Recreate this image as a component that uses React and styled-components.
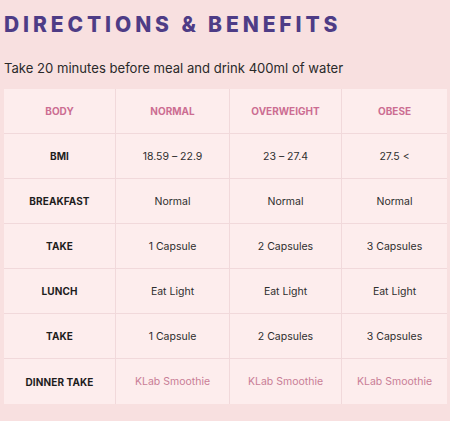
import React from "react";
import styled, { createGlobalStyle } from "styled-components";

const Global = createGlobalStyle`
  html, body { margin: 0; padding: 0; }
  body {
    background: #f8e0e0;
    font-family: Inter, "Open Sans", sans-serif;
    width: 450px;
    height: 421px;
    overflow: hidden;
  }
`;

const Page = styled.div`
  padding: 12px 3px 0 4px;
  display: flex;
  flex-direction: column;
`;

const Title = styled.h1`
  margin: 0;
  font-family: Inter, sans-serif;
  font-weight: 800;
  font-size: 21px;
  line-height: 26px;
  letter-spacing: 3.9px;
  color: #4e3c86;
`;

const Subtitle = styled.p`
  margin: 20px 0 0 0;
  font-size: 13.1px;
  line-height: 20px;
  color: #2a2a2a;
`;

const Table = styled.div`
  margin-top: 11px;
  display: grid;
  grid-template-columns: 112px 114px 112px 105px;
  background: #fdeded;
`;

const Cell = styled.div`
  height: 45px;
  display: flex;
  align-items: center;
  justify-content: center;
  font-size: 10.5px;
  color: ${(p) => (p.$pink ? "#c97d96" : "#2e2e2e")};
  border-right: ${(p) => (p.$last ? "none" : "1px solid #f1d9db")};
  border-bottom: ${(p) => (p.$bottom ? "none" : "1px solid #f1d9db")};
  box-sizing: border-box;
`;

const HeadCell = styled(Cell)`
  color: #cc6d92;
  font-weight: 700;
  font-size: 10px;
`;

const LabelCell = styled(Cell)`
  font-weight: 700;
  color: #1d1d1d;
  font-size: 10px;
  letter-spacing: 0.1px;
`;

const headers = ["BODY", "NORMAL", "OVERWEIGHT", "OBESE"];
const rows = [
  ["BMI", "18.59 – 22.9", "23 – 27.4", "27.5 <"],
  ["BREAKFAST", "Normal", "Normal", "Normal"],
  ["TAKE", "1 Capsule", "2 Capsules", "3 Capsules"],
  ["LUNCH", "Eat Light", "Eat Light", "Eat Light"],
  ["TAKE", "1 Capsule", "2 Capsules", "3 Capsules"],
  ["DINNER TAKE", "KLab Smoothie", "KLab Smoothie", "KLab Smoothie"],
];

export default function App() {
  return (
    <>
      <Global />
      <Page>
        <Title>DIRECTIONS &amp; BENEFITS</Title>
        <Subtitle>Take 20 minutes before meal and drink 400ml of water</Subtitle>
        <Table>
          {headers.map((h, i) => (
            <HeadCell key={h} $last={i === 3}>{h}</HeadCell>
          ))}
          {rows.map((r, ri) =>
            r.map((c, ci) => {
              const bottom = ri === rows.length - 1;
              const pink = ri === rows.length - 1 && ci > 0;
              return ci === 0 ? (
                <LabelCell key={ri + "-" + ci} $bottom={bottom}>{c}</LabelCell>
              ) : (
                <Cell key={ri + "-" + ci} $bottom={bottom} $last={ci === 3} $pink={pink}>
                  {c}
                </Cell>
              );
            })
          )}
        </Table>
      </Page>
    </>
  );
}
